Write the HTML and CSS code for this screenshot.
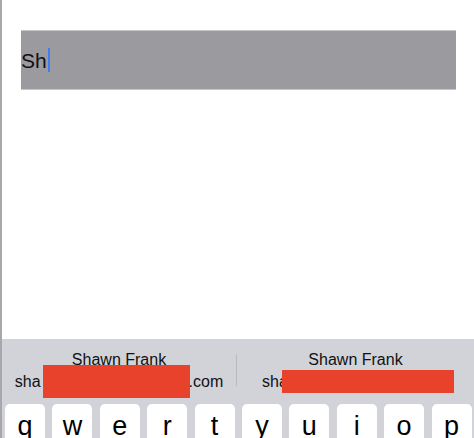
FILE: index.html
```html
<!DOCTYPE html>
<html>
<head>
<meta charset="utf-8">
<link rel="stylesheet" href="styles.css">
</head>
<body>
<div class="screen">
  <div class="page">
    <div class="field">
      <span class="field-text">Sh</span><span class="caret"></span>
    </div>
  </div>
  <div class="keyboard">
    <div class="suggestions">
      <div class="suggestion">
        <div class="name">Shawn Frank</div>
        <div class="email">sha<span class="hidden-part left-gap"></span>.com</div>
      </div>
      <div class="divider"></div>
      <div class="suggestion">
        <div class="name">Shawn Frank</div>
        <div class="email">sha<span class="hidden-part right-gap"></span></div>
      </div>
      <div class="redact redact-left"></div>
      <div class="redact redact-right"></div>
    </div>
    <div class="keys">
      <div class="key">q</div>
      <div class="key">w</div>
      <div class="key">e</div>
      <div class="key">r</div>
      <div class="key">t</div>
      <div class="key">y</div>
      <div class="key">u</div>
      <div class="key">i</div>
      <div class="key">o</div>
      <div class="key">p</div>
    </div>
  </div>
</div>
</body>
</html>
```

FILE: styles.css
```css
html, body {
  margin: 0;
  padding: 0;
  background: #ffffff;
}

body {
  font-family: "Liberation Sans", Arial, sans-serif;
  color: #000000;
}

.screen {
  width: 474px;
  height: 438px;
  overflow: hidden;
  display: flex;
  flex-direction: column;
  box-sizing: border-box;
  border-left: 2px solid #a8a8ac;
  position: relative;
}

.page {
  flex: 0 0 339px;
  height: 339px;
  padding-top: 30px;
  box-sizing: border-box;
  background: #ffffff;
}

.field {
  margin-left: 19px;
  width: 435px;
  height: 60px;
  box-sizing: border-box;
  background: #9b9a9f;
  border-top: 1px solid #c6c6c9;
  border-bottom: 1px solid #c6c6c9;
  display: flex;
  align-items: center;
}

.field-text {
  font-size: 21px;
  line-height: 24px;
  color: #111111;
  margin-top: 1px;
}

.caret {
  display: inline-block;
  width: 2px;
  height: 24px;
  margin-left: 1px;
  background: #3d7fee;
}

.keyboard {
  flex: 1 0 auto;
  background: #d2d3d9;
  margin-left: -2px;
  border-left: 2px solid #a8a8ac;
  display: flex;
  flex-direction: column;
}

.suggestions {
  position: relative;
  height: 64px;
  display: flex;
  align-items: stretch;
}

.suggestion {
  flex: 1;
  display: flex;
  flex-direction: column;
  align-items: center;
  padding-top: 11px;
}

.suggestion:first-child {
  flex: 0 0 234px;
}

.name {
  font-size: 16px;
  line-height: 19px;
  color: #111111;
  white-space: nowrap;
}

.email {
  font-size: 16px;
  line-height: 19px;
  margin-top: 3px;
  color: #111111;
  white-space: nowrap;
}

.hidden-part {
  display: inline-block;
}

.left-gap {
  width: 148px;
}

.right-gap {
  width: 161px;
}

.divider {
  width: 1px;
  margin-top: 15px;
  height: 32px;
  background: #b9bac0;
}

.redact {
  position: absolute;
  background: #e8412c;
}

.redact-left {
  left: 41px;
  top: 26px;
  width: 147px;
  height: 33px;
}

.redact-right {
  left: 280px;
  top: 31px;
  width: 172px;
  height: 23px;
}

.keys {
  display: grid;
  grid-template-columns: repeat(10, 40px);
  column-gap: 7.4px;
  padding-left: 3px;
  padding-top: 1px;
}

.key {
  height: 46px;
  background: #ffffff;
  border-radius: 5px;
  text-align: center;
  font-size: 27px;
  line-height: 26px;
  padding-top: 9px;
  box-sizing: border-box;
  color: #000000;
}
```
